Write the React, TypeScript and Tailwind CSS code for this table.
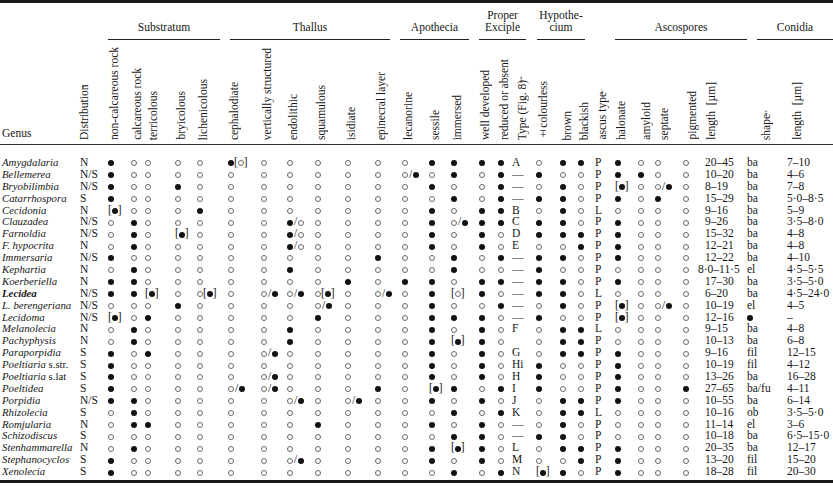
import type { ReactNode } from 'react';

// 30 columns: genus, distribution, then the character columns
const GRID =
    'grid grid-cols-[80px_28px_23px_14px_30px_22px_31px_33px_26px_28px_30px_30px_27px_27px_22px_28px_19px_14px_24px_24px_18px_17px_20px_23px_17px_28px_22px_42px_40px_46px]';

type Head = { label: string; sup?: string; shift?: string };

const HEADS: Head[] = [
    { label: 'Distribution', sup: '*', shift: 'ml-[-2px]' },
    { label: 'non-calcareous rock' },
    { label: 'calcareous rock' },
    { label: 'terricolous', shift: 'ml-[2px]' },
    { label: 'bryicolous' },
    { label: 'lichenicolous' },
    { label: 'cephalodiate' },
    { label: 'vertically structured' },
    { label: 'endolithic' },
    { label: 'squamulous' },
    { label: 'isidiate' },
    { label: 'epinecral layer' },
    { label: 'lecanorine' },
    { label: 'sessile' },
    { label: 'immersed' },
    { label: 'well developed' },
    { label: 'reduced or absent' },
    { label: 'Type (Fig. 8)', sup: '**', shift: 'ml-[4px]' },
    { label: '±colourless', shift: 'ml-[1px]' },
    { label: 'brown', shift: 'ml-[1px]' },
    { label: 'blackish' },
    { label: 'ascus type', sup: '†', shift: 'ml-[1px]' },
    { label: 'halonate' },
    { label: 'amyloid', shift: 'ml-[2px]' },
    { label: 'septate', shift: 'ml-[3px]' },
    { label: 'pigmented', shift: 'ml-[3px]' },
    { label: 'length  [µm]' },
    { label: 'shape', sup: '‡', shift: 'ml-[13px]' },
    { label: 'length  [µm]', shift: 'ml-[4px]' },
];

// f = filled, o = open, _ = empty cell
const ROWS: [ReactNode, string][] = [
    [<i>Amygdalaria</i>, 'N f o o o o f[o] o o o o o o f f f f A o f f P f o o o 20–45 ba 7–10'],
    [<i>Bellemerea</i>, 'N/S f o o o o o o o o o o o/f o f o f — f o o P f f o o 10–20 ba 4–6'],
    [<i>Bryobilimbia</i>, 'N/S f o o f o o o o o o o o f o o f — o f o P [f] o o/f o 8–19 ba 7–8'],
    [<i>Catarrhospora</i>, 'S f o o o o o o o o o o o o f o f — f f o P f o f o 15–29 ba 5·0–8·5'],
    [<i>Cecidonia</i>, 'N [f] o o o f o o o o o o o f o f f B o f o L o o o o 9–16 ba 5–9'],
    [<i>Clauzadea</i>, 'N/S o f o o o o o f/o o o o o f o/f f f C f f o P f o o o 9–26 ba 3·5–8·0'],
    [<i>Farnoldia</i>, 'N/S o f o [f] o o o f/o o o o o f o f o D f f f P f o o o 15–32 ba 4–8'],
    [<i>F. hypocrita</i>, 'N o f o o o o o f/o o o o o f o f o E o o f P f o o o 12–21 ba 4–8'],
    [<i>Immersaria</i>, 'N/S f o o o o o o o o o f o o f o f — f f o P f o o o 12–22 ba 4–10'],
    [<i>Kephartia</i>, 'N o f o o o o o f o o o o o f o o — f o o P o o o o 8·0–11·5 el 4·5–5·5'],
    [<i>Koerberiella</i>, 'N f f o o o o o o o f o f f o f f — f f o P f o o o 17–30 ba 3·5–5·0'],
    [<b><i>Lecidea</i></b>, 'N/S f f [f] o o[f] o o/f o/f o[f] o o/f o f [o] f o — f f o L o o o o 6–20 ba 4·5–24·0'],
    [<i>L. berengeriana</i>, 'N/S o o o f o o o o o/f o o o f o o f — o f o P [f] o o/f o 10–19 el 4–5'],
    [<i>Lecidoma</i>, 'N/S [f] o f o o o o o f o o o f f f o — f o o P [f] o o o 12–16 f –'],
    [<i>Melanolecia</i>, 'N o f o o o o o f o o o o f o f o F o f f L o o o o 9–15 ba 4–8'],
    [<i>Pachyphysis</i>, 'N o f o o o o o f o o o o f [f] f o _ o f f P o o o o 10–13 ba 6–8'],
    [<i>Paraporpidia</i>, 'S f o f o o o o/f o o o o o f o f o G o f f P f o o o 9–16 fil 12–15'],
    [<><i>Poeltiaria</i> s.str.</>, 'S f o o o o o o o o o o o f o f o Hi f o o P f o o o 10–19 fil 4–12'],
    [<><i>Poeltiaria</i> s.lat</>, 'S f o o o o o o/f o o o o o f o f o H f o o P f o o o 13–26 ba 16–28'],
    [<i>Poeltidea</i>, 'S f o o o o o/f o/f o o o f o [f] f o f I f o o P f o o f 27–65 ba/fu 4–11'],
    [<i>Porpidia</i>, 'N/S f f o o o o o o/f o o/f o o f o f o J o f f P f o o o 10–55 ba 6–14'],
    [<i>Rhizolecia</i>, 'S o f o o o o o o o o o o o f o f K o f f L o o o o 10–16 ob 3·5–5·0'],
    [<i>Romjularia</i>, 'N o f f o o o o o f o o o f o f o — o f o P o o o o 11–14 el 3–6'],
    [<i>Schizodiscus</i>, 'S o o o o o o o o o o o o o f f o — f f o P o o o o 10–18 ba 6·5–15·0'],
    [<i>Stenhammarella</i>, 'N o f o o o o o o o o o o f [f] f o L o f f P f o o o 20–35 ba 12–17'],
    [<i>Stephanocyclos</i>, 'S f o o o o o o o/f o o o o f o f o M o o f P f o o o 13–20 fil 15–20'],
    [<i>Xenolecia</i>, 'S f o o o o o o o o o o o o f o f N [f] f o P f o o o 18–28 fil 20–30'],
];

function Dot({ filled }: { filled: boolean }) {
    return filled ? (
        <span className="inline-block w-[6px] h-[6px] rounded-full bg-[#111] align-middle" />
    ) : (
        <span className="inline-block w-[6px] h-[6px] rounded-full border border-[#6a6a6a] align-middle" />
    );
}

function Cell({ code }: { code: string }) {
    if (code === '_') return null;
    if (/^[fo[\]/]+$/.test(code)) {
        return (
            <>
                {code.split('').map((ch, i) =>
                    ch === 'f' ? <Dot key={i} filled /> :
                    ch === 'o' ? <Dot key={i} filled={false} /> :
                    ch === '/' ? <span key={i} className="px-[1px]">/</span> :
                    <span key={i}>{ch}</span>
                )}
            </>
        );
    }
    return <>{code}</>;
}

function Group({ className, children }: { className: string; children: ReactNode }) {
    return (
        <div className={`${className} flex flex-col justify-end items-center text-center border-b border-[#222] pb-[6px] leading-[12px]`}>
            {children}
        </div>
    );
}

export default function App() {
    return (
        <div className="w-[833px] h-[487px] bg-white text-[#161616] font-['Liberation_Serif',serif] text-[11.5px] overflow-hidden">
            {/* top rule */}
            <div className="h-[3px] bg-[#1a1a1a]" />

            {/* group headings */}
            <div className={`${GRID} h-[37px]`}>
                <Group className="col-start-3 col-span-5 mr-[8px]">Substratum</Group>
                <Group className="col-start-8 col-span-6 ml-[2px] mr-[12px]">Thallus</Group>
                <Group className="col-start-14 col-span-3 ml-[-2px] mr-[10px]">Apothecia</Group>
                <Group className="col-start-17 col-span-3 mr-[10px]">
                    <span>Proper</span>
                    <span>Exciple</span>
                </Group>
                <Group className="col-start-20 col-span-3 ml-[1px] mr-[10px]">
                    <span>Hypothe-</span>
                    <span>cium</span>
                </Group>
                <Group className="col-start-24 col-span-5">Ascospores</Group>
                <Group className="col-start-29 col-span-2 ml-[10px]">Conidia</Group>
            </div>

            {/* column headings */}
            <div className={`${GRID} h-[105px] pb-[4px] items-end border-b border-[#333]`}>
                <div className="pl-[2px] leading-[12px] pb-[1px]">Genus</div>
                {HEADS.map((h, i) => (
                    <div
                        key={i}
                        className={`${h.shift ?? ''} [writing-mode:vertical-rl] rotate-180 leading-[12px] whitespace-pre`}
                    >
                        {h.label}
                        {h.sup && <sup className="text-[7px]">{h.sup}</sup>}
                    </div>
                ))}
            </div>

            {/* body */}
            <div className="pt-[12px]">
                {ROWS.map(([genus, data], r) => (
                    <div key={r} className={`${GRID} h-[11.9px] leading-[11.9px] whitespace-nowrap`}>
                        <div className="pl-[2px] text-[10.8px]">{genus}</div>
                        {data.split(' ').map((c, i) => (
                            <div key={i} className={i === 26 && c.length > 6 ? 'ml-[-7px]' : ''}>
                                <Cell code={c} />
                            </div>
                        ))}
                    </div>
                ))}
            </div>

            {/* bottom rule */}
            <div className="mt-[2px] h-[3px] bg-[#1a1a1a]" />
        </div>
    );
}
